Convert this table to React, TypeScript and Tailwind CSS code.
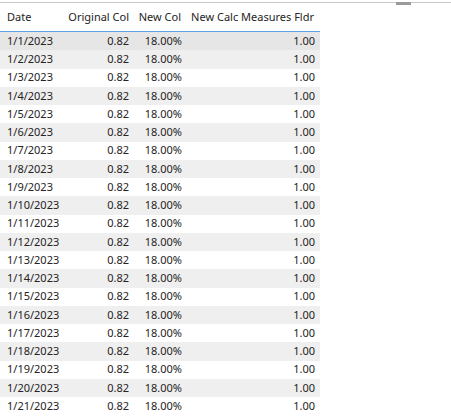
const rows = Array.from({ length: 21 }, (_, i) => `1/${i + 1}/2023`);

export default function App() {
  return (
    <div
      className="relative h-[417px] w-[451px] overflow-hidden bg-white text-[11px] text-[#252423]"
      style={{ fontFamily: '"Noto Sans", "Open Sans", sans-serif' }}
    >
      <div className="h-[2px]" />
      <div className="h-px bg-[#c8c8c8]" />
      <div className="absolute left-[396px] top-[2px] h-[3px] w-[15px] bg-[#9b9b9b]" />

      <div className="w-[320px]">
        <div className="box-border flex h-[29px] items-center border-b border-[#5ea1e6]">
          <div className="w-[63px] pl-[7px]">Date</div>
          <div className="w-[70px] pr-[4px] text-right">Original Col</div>
          <div className="w-[52px] pr-[4px] text-right">New Col</div>
          <div className="flex-1 pr-[6px] text-right whitespace-nowrap">New Calc Measures Fldr</div>
        </div>

        {rows.map((d, i) => (
          <div
            key={d}
            className={
              'flex h-[18.25px] items-center ' +
              (i === 0 ? 'bg-[#e6e6e6]' : i % 2 === 1 ? 'bg-[#efefef]' : 'bg-white')
            }
          >
            <div className="w-[63px] pl-[7px]">{d}</div>
            <div className="w-[70px] pr-[4px] text-right">0.82</div>
            <div className="w-[52px] pr-[3px] text-right">18.00%</div>
            <div className="flex-1 pr-[5px] text-right">1.00</div>
          </div>
        ))}
      </div>
    </div>
  );
}
